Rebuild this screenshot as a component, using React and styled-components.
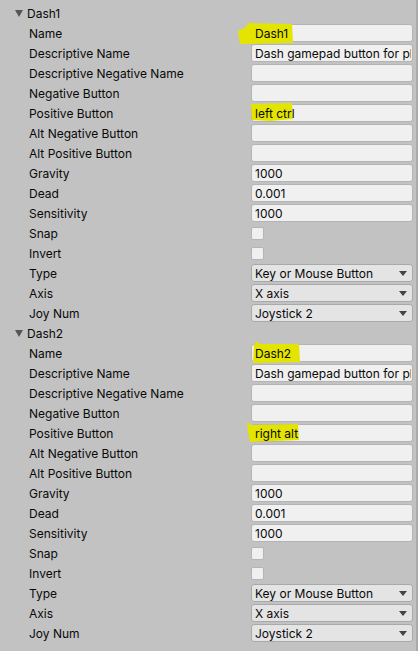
import React from "react";
import styled, { createGlobalStyle } from "styled-components";

const GlobalStyle = createGlobalStyle`
  html, body {
    margin: 0;
    padding: 0;
    background: #c2c2c2;
  }
  body {
    font-family: Inter, "Noto Sans", "Liberation Sans", sans-serif;
    font-size: 12px;
    color: #090909;
  }
`;

const Panel = styled.div`
  display: flex;
  width: 418px;
  height: 651px;
  background: #c2c2c2;
  overflow: hidden;
`;

const List = styled.div`
  flex: 1;
  min-width: 0;
  display: flex;
  flex-direction: column;
  padding: 3px 3px 0 0;
`;

const EdgeStrip = styled.div`
  width: 2px;
  flex-shrink: 0;
  background: #ababab;
`;

const Header = styled.div`
  display: flex;
  align-items: center;
  height: 20px;
  padding-left: 15px;
  gap: 4px;
`;

const Arrow = styled.span`
  width: 0;
  height: 0;
  border-left: 4px solid transparent;
  border-right: 4px solid transparent;
  border-top: 7px solid #555;
`;

const Row = styled.div`
  display: flex;
  align-items: center;
  height: 20px;
`;

const Label = styled.div`
  width: 251px;
  flex-shrink: 0;
  box-sizing: border-box;
  padding-left: 29px;
  white-space: nowrap;
  overflow: hidden;
`;

const FieldBox = styled.div`
  position: relative;
  flex: 1;
  min-width: 0;
  height: 18px;
  box-sizing: border-box;
  display: flex;
  align-items: center;
  padding: ${({ $dropdown }) => ($dropdown ? "0 3px" : "0 1px 0 3px")};
  border: 1px solid ${({ $dropdown }) => ($dropdown ? "#a9a9a9" : "#b4b4b4")};
  border-radius: 3px;
  background: ${({ $dropdown }) => ($dropdown ? "#e4e4e4" : "#f0f0f0")};
  white-space: nowrap;
`;

const FieldText = styled.span`
  position: relative;
  z-index: 1;
  overflow: hidden;
  flex: 1;
  min-width: 0;
`;

const Marker = styled.svg`
  position: absolute;
  z-index: 0;
  pointer-events: none;
`;

const DropArrow = styled.span`
  flex-shrink: 0;
  width: 0;
  height: 0;
  margin-right: 2px;
  border-left: 4px solid transparent;
  border-right: 4px solid transparent;
  border-top: 5px solid #444;
`;

const Check = styled.div`
  width: 13px;
  height: 13px;
  box-sizing: border-box;
  border: 1px solid #b4b4b4;
  border-radius: 2px;
  background: #f0f0f0;
`;

const highlightShapes = {
  dash1: { left: -16, top: -2, w: 58, h: 22, d: "M2 8 L10 4 L12 0 L56 1 L57 20 L4 21 Z" },
  ctrl: { left: -2, top: -3, w: 44, h: 20, d: "M1 2 L42 1 L43 17 L20 19 L2 18 Z" },
  dash2: { left: -1, top: -4, w: 50, h: 24, d: "M3 4 L6 0 L8 3 L48 3 L49 21 L2 22 Z" },
  alt: { left: -6, top: -3, w: 54, h: 21, d: "M1 0 L5 3 L52 2 L53 18 L4 20 L2 10 Z" },
};

const Highlight = ({ kind }) => {
  const s = highlightShapes[kind];
  return (
    <Marker
      width={s.w}
      height={s.h}
      viewBox={`0 0 ${s.w} ${s.h}`}
      style={{ left: s.left, top: s.top }}
    >
      <path d={s.d} fill="#e3e400" />
    </Marker>
  );
};

const Field = ({ value, highlight, type }) => {
  if (type === "check") return <Check />;
  return (
    <FieldBox $dropdown={type === "dropdown"}>
      {highlight && <Highlight kind={highlight} />}
      <FieldText>{value}</FieldText>
      {type === "dropdown" && <DropArrow />}
    </FieldBox>
  );
};

const axes = [
  { name: "Dash1", positive: "left ctrl", nameMark: "dash1", posMark: "ctrl" },
  { name: "Dash2", positive: "right alt", nameMark: "dash2", posMark: "alt" },
];

const buildRows = (axis) => [
  { label: "Name", value: axis.name, highlight: axis.nameMark },
  { label: "Descriptive Name", value: "Dash gamepad button for player" },
  { label: "Descriptive Negative Name", value: "" },
  { label: "Negative Button", value: "" },
  { label: "Positive Button", value: axis.positive, highlight: axis.posMark },
  { label: "Alt Negative Button", value: "" },
  { label: "Alt Positive Button", value: "" },
  { label: "Gravity", value: "1000" },
  { label: "Dead", value: "0.001" },
  { label: "Sensitivity", value: "1000" },
  { label: "Snap", type: "check" },
  { label: "Invert", type: "check" },
  { label: "Type", value: "Key or Mouse Button", type: "dropdown" },
  { label: "Axis", value: "X axis", type: "dropdown" },
  { label: "Joy Num", value: "Joystick 2", type: "dropdown" },
];

export default function App() {
  return (
    <>
      <GlobalStyle />
      <Panel>
        <List>
          {axes.map((axis) => (
            <React.Fragment key={axis.name}>
              <Header>
                <Arrow />
                <span>{axis.name}</span>
              </Header>
              {buildRows(axis).map((row) => (
                <Row key={row.label}>
                  <Label>{row.label}</Label>
                  <Field {...row} />
                </Row>
              ))}
            </React.Fragment>
          ))}
        </List>
        <EdgeStrip />
      </Panel>
    </>
  );
}
